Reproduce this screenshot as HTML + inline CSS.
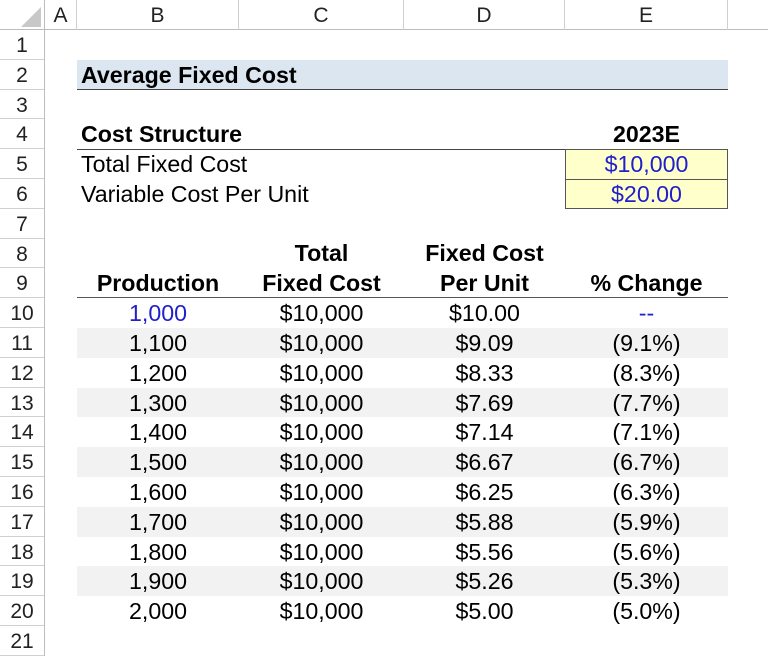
<!DOCTYPE html>
<html><head><style>
body{margin:0;width:768px;height:656px;overflow:hidden;background:#fff;font-family:"Liberation Sans",Arial,sans-serif;position:relative}
.a{position:absolute}
.ch{top:0;height:30px;line-height:31px;text-align:center;font-size:21px;color:#222;border-right:1px solid #d0d0d0;box-sizing:border-box}
.rh{left:0;width:44px;text-align:center;font-size:21px;color:#222;border-bottom:1px solid #d0d0d0;box-sizing:border-box}
.c{font-size:23.2px;color:#000;white-space:nowrap;line-height:30px;box-sizing:border-box}
.b{font-weight:bold}
.bl{color:#1f1fcc}
</style></head><body>
<div class="a" style="left:0;top:29px;width:768px;height:1px;background:#bcbcbc"></div>
<div class="a" style="left:44px;top:0;width:1px;height:656px;background:#bcbcbc"></div>
<svg class="a" style="left:20px;top:6px" width="22" height="22"><polygon points="21,1 21,21 1,21" fill="#c8c8c8"/></svg>
<div class="a ch" style="left:45px;width:32px">A</div>
<div class="a ch" style="left:77px;width:162px">B</div>
<div class="a ch" style="left:239px;width:165px">C</div>
<div class="a ch" style="left:404px;width:161px">D</div>
<div class="a ch" style="left:565px;width:163px">E</div>
<div id="rows"></div>
<div class="a" style="left:77px;top:60px;width:651px;height:29px;background:#dce6f1;border-bottom:1.5px solid #444"></div>
<div class="a c b" style="left:81px;top:60px">Average Fixed Cost</div>
<div class="a" style="left:77px;top:149px;width:651px;height:1px;background:#444"></div>
<div class="a c b" style="left:81px;top:119px">Cost Structure</div>
<div class="a c b" style="left:565px;top:119px;width:163px;text-align:center">2023E</div>
<div class="a c" style="left:81px;top:149px">Total Fixed Cost</div>
<div class="a c" style="left:81px;top:179px">Variable Cost Per Unit</div>
<div class="a" style="left:565px;top:149px;width:163px;height:60px;background:#ffffcc;border:1px solid #555;box-sizing:border-box"></div>
<div class="a" style="left:565px;top:179px;width:163px;height:1px;background:#555"></div>
<div class="a c bl" style="left:565px;top:149px;width:163px;text-align:center">$10,000</div>
<div class="a c bl" style="left:565px;top:179px;width:163px;text-align:center">$20.00</div>
<div class="a c b" style="left:239px;top:238px;width:165px;text-align:center">Total</div>
<div class="a c b" style="left:404px;top:238px;width:161px;text-align:center">Fixed Cost</div>
<div class="a c b" style="left:77px;top:268px;width:162px;text-align:center">Production</div>
<div class="a c b" style="left:239px;top:268px;width:165px;text-align:center">Fixed Cost</div>
<div class="a c b" style="left:404px;top:268px;width:161px;text-align:center">Per Unit</div>
<div class="a c b" style="left:565px;top:268px;width:163px;text-align:center">% Change</div>
<div class="a" style="left:77px;top:297px;width:651px;height:1px;background:#555"></div>
<div id="data"></div>
<script>
var R=29.8,h='';
for(var i=1;i<=21;i++){var t=30+(i-1)*R;h+='<div class="a rh" style="top:'+t+'px;height:'+R+'px;line-height:'+(R+2)+'px">'+i+'</div>';}
document.getElementById('rows').outerHTML=h;
var d=[["1,000","$10.00","--"],["1,100","$9.09","(9.1%)"],["1,200","$8.33","(8.3%)"],["1,300","$7.69","(7.7%)"],["1,400","$7.14","(7.1%)"],["1,500","$6.67","(6.7%)"],["1,600","$6.25","(6.3%)"],["1,700","$5.88","(5.9%)"],["1,800","$5.56","(5.6%)"],["1,900","$5.26","(5.3%)"],["2,000","$5.00","(5.0%)"]];
h='';
for(var k=0;k<11;k++){var t=30+(9+k)*R;
if(k%2==1)h+='<div class="a" style="left:77px;top:'+t+'px;width:651px;height:'+R+'px;background:#f2f2f2"></div>';
var s='top:'+t+'px;';
h+='<div class="a c'+(k==0?' bl':'')+'" style="'+s+'left:77px;width:162px;text-align:center">'+d[k][0]+'</div>';
h+='<div class="a c" style="'+s+'left:239px;width:165px;text-align:center">$10,000</div>';
h+='<div class="a c" style="'+s+'left:404px;width:161px;text-align:center">'+d[k][1]+'</div>';
h+='<div class="a c'+(k==0?' bl':'')+'" style="'+s+'left:565px;width:163px;text-align:center">'+d[k][2]+'</div>';}
document.getElementById('data').outerHTML=h;
</script>
</body></html>
